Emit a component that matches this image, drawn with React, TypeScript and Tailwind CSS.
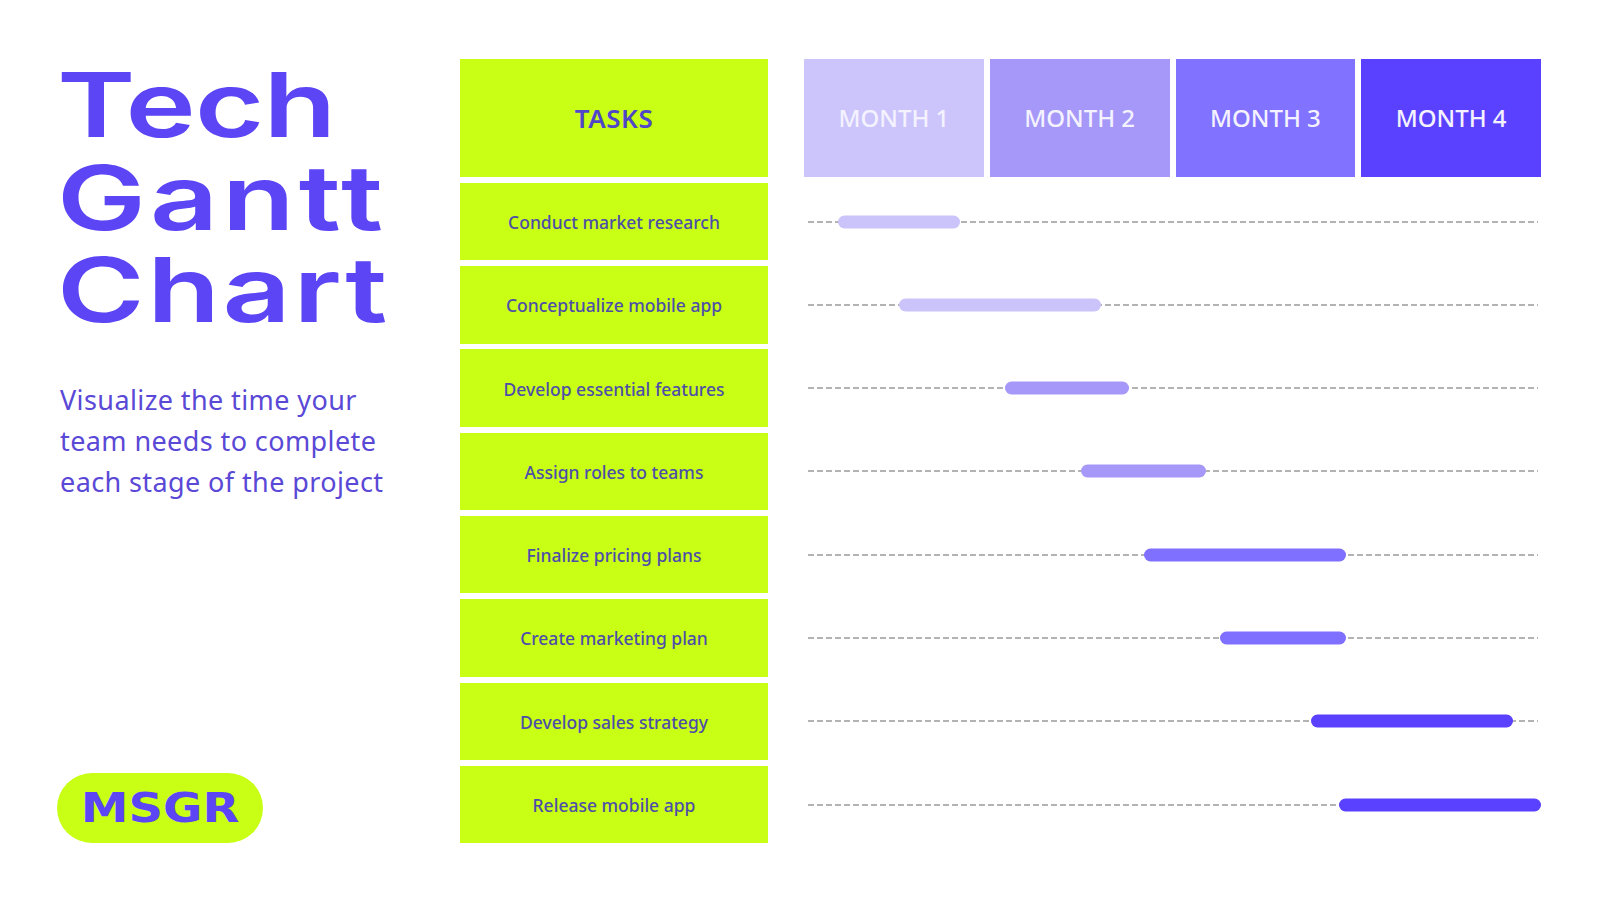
import React from "react";

const tasks = [
  { name: "Conduct market research", left: 34, width: 122, color: "bg-[#cbc4fb]" },
  { name: "Conceptualize mobile app", left: 95, width: 202, color: "bg-[#cbc4fb]" },
  { name: "Develop essential features", left: 201, width: 124, color: "bg-[#a698f8]" },
  { name: "Assign roles to teams", left: 277, width: 125, color: "bg-[#a698f8]" },
  { name: "Finalize pricing plans", left: 340, width: 202, color: "bg-[#8070ff]" },
  { name: "Create marketing plan", left: 416, width: 126, color: "bg-[#8070ff]" },
  { name: "Develop sales strategy", left: 507, width: 202, color: "bg-[#5a41ff]" },
  { name: "Release mobile app", left: 535, width: 202, color: "bg-[#5a41ff]" },
];

const months = [
  { label: "MONTH 1", color: "bg-[#ccc5fb]" },
  { label: "MONTH 2", color: "bg-[#a598f8]" },
  { label: "MONTH 3", color: "bg-[#8173ff]" },
  { label: "MONTH 4", color: "bg-[#5a41ff]" },
];

const DashedLine = () => (
  <svg className="absolute left-[4px] top-1/2 -translate-y-1/2" width="730" height="2">
    <line x1="0" y1="1" x2="730" y2="1" stroke="#9b9b9b" strokeWidth="1.3" strokeDasharray="6 3" />
  </svg>
);

const App = () => {
  return (
    <div className="flex h-[900px] w-[1600px] bg-white pt-[59px] font-['Noto_Sans',sans-serif]">
      {/* left intro */}
      <div className="flex w-[460px] flex-col pb-[57px] pl-[57px]">
        <h1 className="origin-left scale-x-[1.32] font-['Inter',sans-serif] text-[90px] font-semibold leading-[92.5px] text-[#5b45f5]">
          <span className="block tracking-[-0.5px]">Tech</span>
          <span className="block tracking-[3px]">Gantt</span>
          <span className="block tracking-[2px]">Chart</span>
        </h1>
        <p className="mt-[42px] pl-[3px] text-[27px] leading-[41px] tracking-[0.4px] text-[#5a48d6]">
          Visualize the time your
          <br />
          team needs to complete
          <br />
          each stage of the project
        </p>
        <div className="mt-auto flex h-[70px] w-[206px] items-center justify-center rounded-full bg-[#c8ff14]">
          <span className="origin-center scale-x-[1.2] font-['DejaVu_Sans',sans-serif] text-[40px] font-bold leading-none text-[#5b45f5]">
            MSGR
          </span>
        </div>
      </div>

      {/* tasks column */}
      <div className="flex w-[308px] flex-col gap-[5.8px]">
        <div className="flex h-[118px] items-center justify-center bg-[#c8ff14] text-[26px] font-semibold tracking-[0.5px] text-[#5046c8]">
          TASKS
        </div>
        {tasks.map((t) => (
          <div
            key={t.name}
            className="flex h-[77.5px] items-center justify-center bg-[#c8ff14] pt-px text-[17.5px] font-medium text-[#4e4ea8]"
          >
            {t.name}
          </div>
        ))}
      </div>

      {/* timeline */}
      <div className="ml-[36px] flex w-[737px] flex-col gap-[5.8px]">
        <div className="flex h-[118px] gap-[6px]">
          {months.map((m) => (
            <div
              key={m.label}
              className={`flex flex-1 items-center justify-center text-[24px] font-medium text-[#f4f2ff] ${m.color}`}
            >
              {m.label}
            </div>
          ))}
        </div>
        {tasks.map((t) => (
          <div key={t.name} className="relative h-[77.5px]">
            <DashedLine />
            <div
              className={`absolute top-1/2 h-[13px] -translate-y-1/2 rounded-full ${t.color}`}
              style={{ left: t.left, width: t.width }}
            />
          </div>
        ))}
      </div>
    </div>
  );
};

export default App;
